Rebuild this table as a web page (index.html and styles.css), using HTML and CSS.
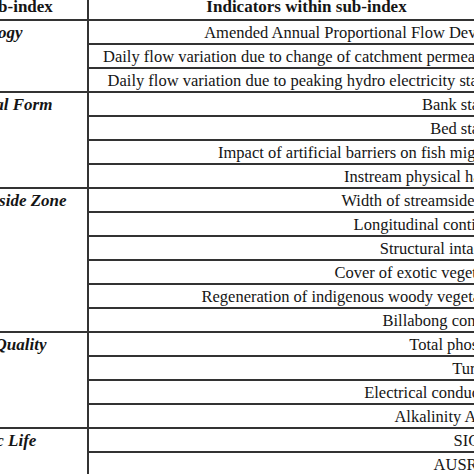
FILE: index.html
```html
<!DOCTYPE html>
<html>
<head>
<meta charset="utf-8">
<link rel="stylesheet" href="styles.css">
</head>
<body>
<div class="crop">
<table class="isc">
  <thead>
    <tr class="head"><th class="sub">Sub-index</th><th class="ind">Indicators within sub-index</th></tr>
  </thead>
  <tbody>
    <tr><td class="name" rowspan="3">Hydrology</td><td>Amended Annual Proportional Flow Deviation</td></tr>
    <tr><td>Daily flow variation due to change of catchment permeability&nbsp;</td></tr>
    <tr><td>Daily flow variation due to peaking hydro electricity stations&nbsp;</td></tr>
    <tr><td class="name" rowspan="4">Physical Form</td><td>Bank stability</td></tr>
    <tr><td>Bed stability</td></tr>
    <tr><td>Impact of artificial barriers on fish migration</td></tr>
    <tr><td>Instream physical habitat&nbsp;</td></tr>
    <tr><td class="name" rowspan="6">Streamside Zone</td><td>Width of streamside zone&nbsp;</td></tr>
    <tr><td>Longitudinal continuity&nbsp;</td></tr>
    <tr><td>Structural intactness</td></tr>
    <tr><td>Cover of exotic vegetation&nbsp;</td></tr>
    <tr><td>Regeneration of indigenous woody vegetation&nbsp;&nbsp;</td></tr>
    <tr><td>Billabong condition</td></tr>
    <tr><td class="name" rowspan="4">Water Quality</td><td>Total phosphate</td></tr>
    <tr><td>Turbidity</td></tr>
    <tr><td>Electrical conductivity</td></tr>
    <tr><td>Alkalinity Acidity</td></tr>
    <tr><td class="name" rowspan="2">Aquatic Life</td><td>SIGNAL</td></tr>
    <tr><td>AUSRIVAS</td></tr>
  </tbody>
</table>
</div>
</body>
</html>
```

FILE: styles.css
```css
html, body {
  margin: 0;
  padding: 0;
  background: #ffffff;
  overflow: hidden;
}
.crop {
  width: 474px;
  height: 474px;
  overflow: hidden;
}
.isc {
  border-collapse: collapse;
  table-layout: fixed;
  width: 583px;
  margin-left: -57px;
  margin-top: -14px;
  font-family: "Liberation Serif", "Times New Roman", serif;
  font-size: 16.5px;
  color: #151515;
}
.isc th, .isc td {
  border: 2px solid #333333;
  line-height: 18px;
  box-sizing: content-box;
}
.isc tr { height: 24px; }
.isc th {
  font-weight: bold;
  font-size: 17px;
  text-align: center;
  height: 28px;
  padding: 0 0 3px 0;
  vertical-align: bottom;
}
.isc .sub { width: 142px; }
.isc td {
  height: 19px;
  padding: 3px 10px 0 0;
  text-align: right;
  white-space: nowrap;
  vertical-align: top;
}
.isc td.name {
  font-weight: bold;
  font-style: italic;
  font-size: 17px;
  text-align: left;
  padding: 3px 0 0 4px;
}
```
